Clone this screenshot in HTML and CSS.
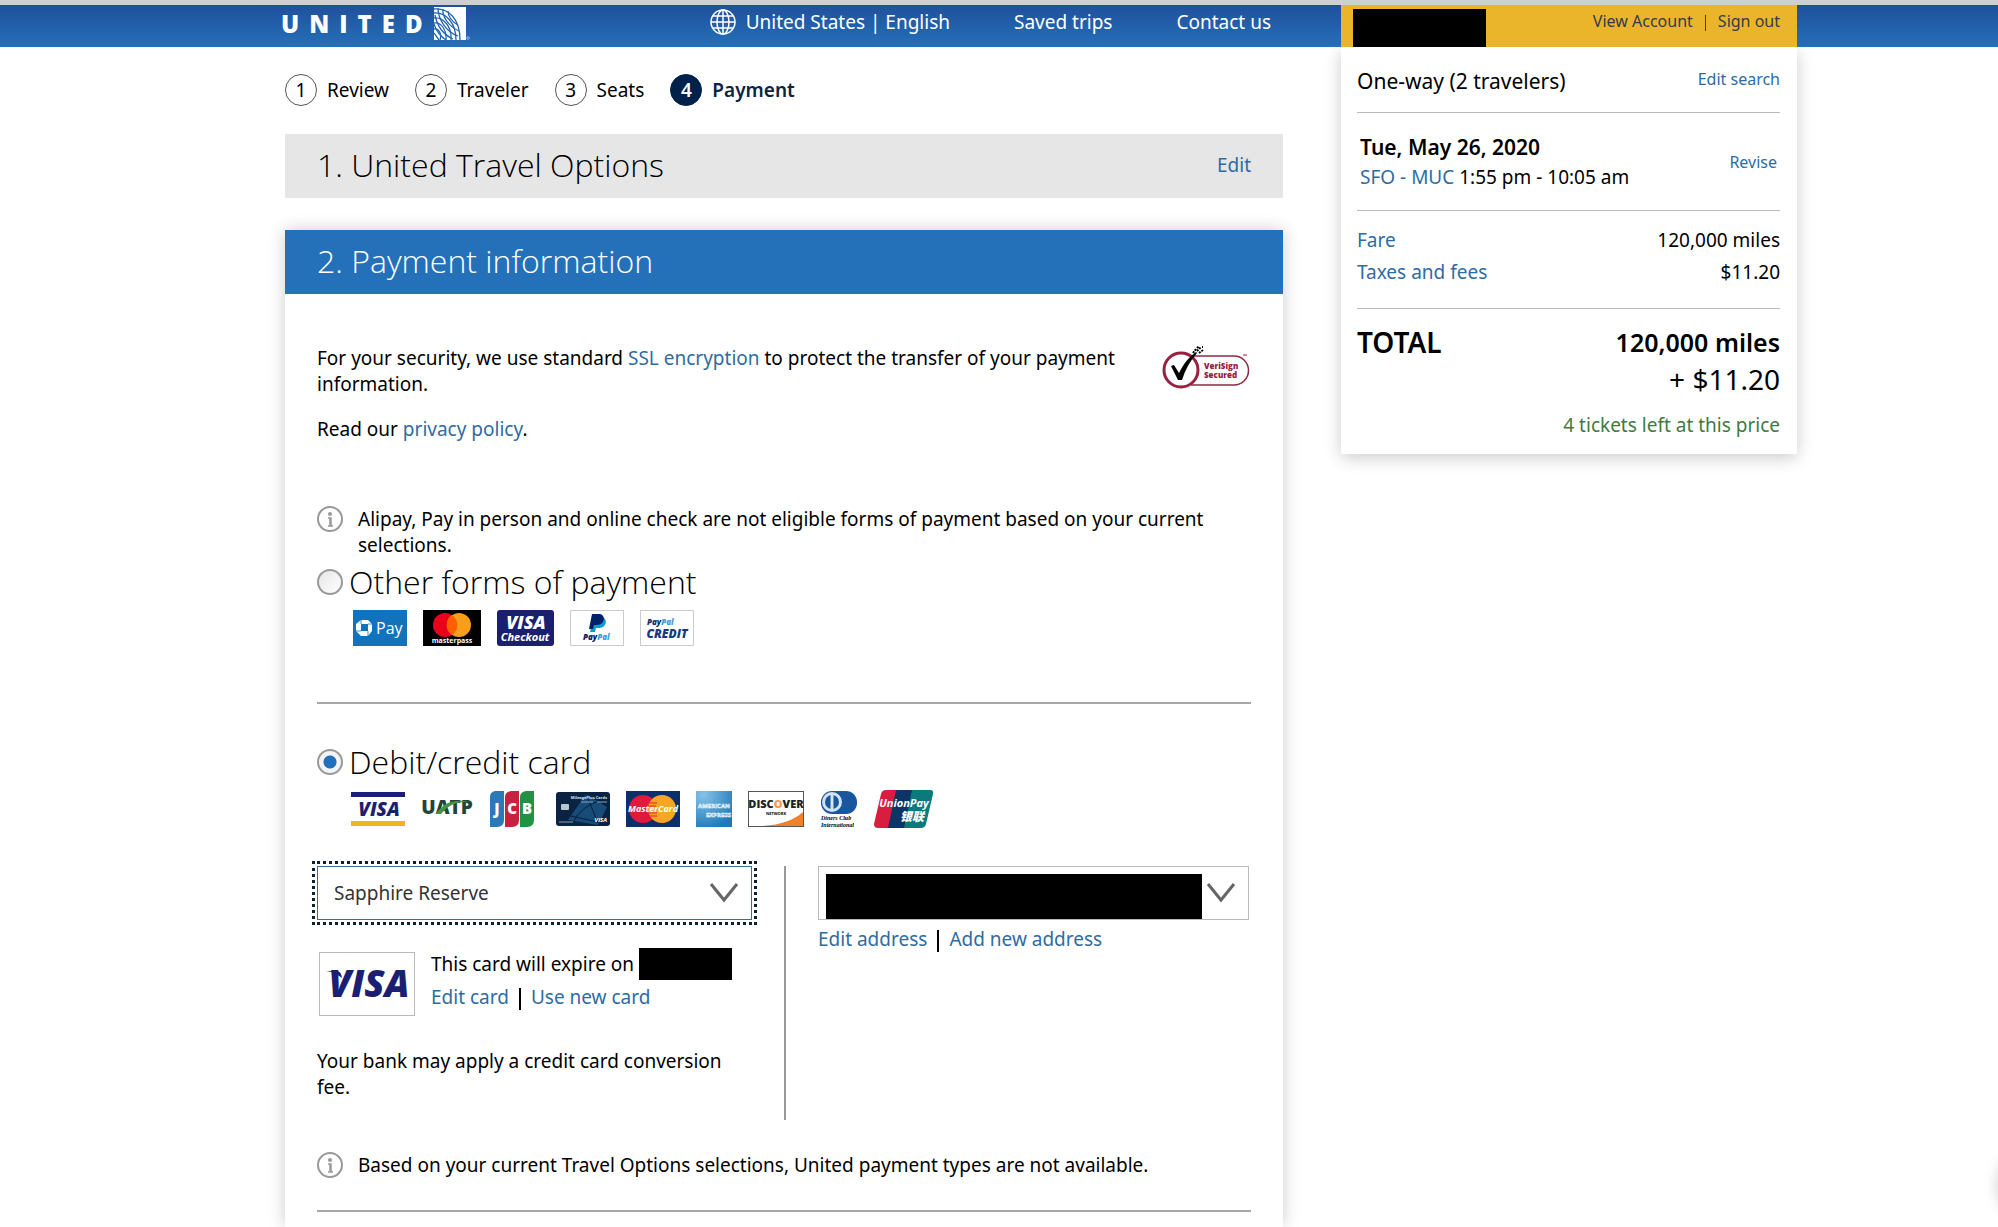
FILE: index.html
```html
<!DOCTYPE html>
<html lang="en">
<head>
    <meta charset="UTF-8">
    <meta name="viewport" content="width=device-width, initial-scale=1.0">
    <title>Payment | United Airlines</title>
    <link rel="stylesheet" href="styles.css">
</head>
<body>
    <!-- Top bar -->
    <header class="topbar">
        <div class="topbar-main">
            <a class="logo" href="#" aria-label="United home">
                <span class="logo-name">UNITED</span>
                <svg width="36" height="34" viewBox="0 0 36 34">
                    <rect width="32" height="33" fill="#fff"/>
                    <g fill="none" stroke="#2565ae" stroke-width="1.3">
                        <path d="M0 2C15 1 26 12 26 33"/>
                        <path d="M0 6C12 5 22 16 22 33"/>
                        <path d="M0 11C10 10 18 20 17 33"/>
                        <path d="M0 16C8 15 13 24 12 33"/>
                        <path d="M0 22C5 21 8 27 6 33"/>
                        <path d="M4 1C4 12 12 25 24 29"/>
                        <path d="M9 2C8 9 14 19 25 24"/>
                        <path d="M14 4C14 9 18 15 24 18"/>
                        <path d="M1 8C3 18 8 27 19 32"/>
                        <path d="M0 17C2 23 6 29 12 33"/>
                        <path d="M0 26L5 33"/>
                    </g>
                    <circle cx="34" cy="31" r="1.3" fill="none" stroke="#8fb6dc" stroke-width="1"/>
                </svg>
            </a>
            <nav class="topnav">
                <a class="locale" href="#">
                    <svg width="26" height="26" viewBox="0 0 26 26" fill="none" stroke="#fff" stroke-width="1.5">
                        <circle cx="13" cy="13" r="12"/>
                        <ellipse cx="13" cy="13" rx="6" ry="12"/>
                        <path d="M13 1v24M1 13h24M3 7h20M3 19h20"/>
                    </svg>
                    United States | English
                </a>
                <a href="#">Saved trips</a>
                <a href="#">Contact us</a>
            </nav>
        </div>
        <div class="account">
            <span class="account-name"></span>
            <div class="account-links">
                <a href="#">View Account</a>
                <a href="#">Sign out</a>
            </div>
        </div>
    </header>

    <div class="page">
        <main class="content">
            <ol class="steps">
                <li><span class="step-number">1</span>Review</li>
                <li><span class="step-number">2</span>Traveler</li>
                <li><span class="step-number">3</span>Seats</li>
                <li class="current"><span class="step-number">4</span>Payment</li>
            </ol>

            <section class="section-closed">
                <h2>1. United Travel Options</h2>
                <a href="#">Edit</a>
            </section>

            <section class="payment">
                <h2 class="payment-title">2. Payment information</h2>
                <form class="payment-body">
                    <div class="security">
                        <div class="security-text">
                            <p>For your security, we use standard <a href="#">SSL encryption</a> to protect the transfer of your payment information.</p>
                            <p>Read our <a href="#">privacy policy</a>.</p>
                        </div>
                        <svg class="verisign" width="90" height="44" viewBox="0 0 90 44">
                            <path d="M32 11H73a14 14 0 0 1 0 29H30" fill="#fff" stroke="#8c2a45" stroke-width="1.5"/>
                            <circle cx="20" cy="25" r="17" fill="#fff" stroke="#98213f" stroke-width="3"/>
                            <path d="M10 21l3-1 5 8C23 18 28 12 35 7l1 1C29 16 24 25 21 35h-4z"/>
                            <path d="M32 8l3-4M36 6l4-4M38 8l4-3M36 3l2-2M41 2h1" stroke="#000" stroke-width="2" stroke-dasharray="2 1"/>
                            <text x="43" y="24" class="seal-text">VeriSign</text>
                            <text x="43" y="33" class="seal-text">Secured</text>
                            <path d="M82 10h4" stroke="#98213f"/>
                        </svg>
                    </div>

                    <div class="notice">
                        <svg class="info-icon" width="26" height="26" viewBox="0 0 26 26">
                            <circle cx="13" cy="13" r="12" fill="none" stroke="#999" stroke-width="2"/>
                            <circle cx="13" cy="8" r="2" fill="#999"/>
                            <path d="M11 12h3v8M11 20h5M13 12v8" fill="none" stroke="#999" stroke-width="1.5"/>
                        </svg>
                        <p>Alipay, Pay in person and online check are not eligible forms of payment based on your current selections.</p>
                    </div>

                    <label class="method"><input type="radio" name="method">Other forms of payment</label>
                    <div class="logos logos-other">
                        <svg width="54" height="36" viewBox="0 0 54 36">
                            <rect width="54" height="36" fill="#1273bd"/>
                            <path d="M8 10h7l4 4v7l-4 5H8l-5-5v-7z" fill="#fff"/>
                            <path d="M8 14h7v7H8z" fill="#1273bd"/>
                            <path d="M8 10v4M19 14h-4M15 26v-5M3 21h5" stroke="#1273bd" stroke-width=".8"/>
                            <text x="23" y="24" font-size="16" fill="#fff">Pay</text>
                        </svg>
                        <svg width="58" height="36" viewBox="0 0 58 36">
                            <rect width="58" height="36"/>
                            <circle cx="22" cy="15" r="12" fill="#eb001b"/>
                            <circle cx="36" cy="15" r="12" fill="#f79e1b"/>
                            <path d="M29 5a12 12 0 0 1 0 20 12 12 0 0 1 0-20" fill="#ff5f00"/>
                            <text x="29" y="33" text-anchor="middle" font-size="7" font-weight="700" fill="#fff">masterpass</text>
                        </svg>
                        <svg width="57" height="36" viewBox="0 0 57 36">
                            <rect width="57" height="36" rx="3" fill="#1a1f71"/>
                            <text x="29" y="19" text-anchor="middle" font-size="18" font-weight="800" font-style="italic" fill="#fff">VISA</text>
                            <text x="28" y="31" text-anchor="middle" font-size="11" font-weight="700" font-style="italic" fill="#fff">Checkout</text>
                        </svg>
                        <svg width="54" height="36" viewBox="0 0 54 36">
                            <rect x=".5" y=".5" width="53" height="35" fill="#fff" stroke="#ccc"/>
                            <path d="M24 7h8c6 1 5 11-3 11h-3l-1 4h-5z" fill="#009cde"/>
                            <path d="M22 4h8c6 1 5 11-3 11h-3l-1 4h-4z" fill="#012169"/>
                            <text x="13" y="30" font-size="8" font-weight="800" font-style="italic" fill="#012169">Pay<tspan fill="#3ba0d8">Pal</tspan></text>
                        </svg>
                        <svg width="54" height="36" viewBox="0 0 54 36">
                            <rect x=".5" y=".5" width="53" height="35" fill="#fff" stroke="#ccc"/>
                            <text x="7" y="15" font-size="8" font-weight="800" font-style="italic" fill="#10316b">Pay<tspan fill="#3ba0d8">Pal</tspan></text>
                            <text x="27" y="28" text-anchor="middle" font-size="12" font-weight="800" font-style="italic" fill="#173a7a">CREDIT</text>
                        </svg>
                    </div>

                    <hr>

                    <label class="method"><input type="radio" name="method" checked>Debit/credit card</label>
                    <div class="logos logos-cards">
                        <svg width="54" height="36" viewBox="0 0 54 36">
                            <rect y="1" width="54" height="5" fill="#1a1f71"/>
                            <rect y="30" width="54" height="5" fill="#f0b323"/>
                            <text x="28" y="25" text-anchor="middle" font-size="19" font-weight="800" font-style="italic" fill="#1a1f71">VISA</text>
                        </svg>
                        <svg width="52" height="36" viewBox="0 0 52 36">
                            <text x="26" y="23" text-anchor="middle" font-size="19" font-weight="800" fill="#214536">UATP</text>
                            <path d="M15 23C22 12 32 7 50 11 38 10 28 13 20 23z" fill="#3f9448"/>
                        </svg>
                        <svg width="51" height="38" viewBox="0 0 51 38">
                            <path d="M6 1h9v29q0 7-7 7H1V7q0-5 5-6z" fill="#2a7ab8"/>
                            <path d="M22 1h8v29q0 7-7 7h-7V7q0-5 6-6z" fill="#c8203f"/>
                            <path d="M37 1h8v29q0 7-7 7h-7V7q0-5 6-6z" fill="#219146"/>
                            <g font-size="15" font-weight="800" fill="#fff" text-anchor="middle">
                                <text x="8" y="24">J</text>
                                <text x="23" y="24">C</text>
                                <text x="38" y="24">B</text>
                            </g>
                        </svg>
                        <svg width="54" height="36" viewBox="0 0 54 36">
                            <rect y="1" width="54" height="34" rx="3" fill="#0a2342"/>
                            <path d="M12 29L30 3l21 13-9 18z" fill="#174b78"/>
                            <path d="M16 34Q24 14 47 9M10 24L42 31M30 3l12 29" fill="none" stroke="#08203d"/>
                            <rect x="5" y="13" width="8" height="6" rx="1" fill="#b9c4cd"/>
                            <text x="51" y="8" text-anchor="end" font-size="4" font-weight="700" fill="#d4e3ee">MileagePlus Cards</text>
                            <text x="51" y="31" text-anchor="end" font-size="6" font-weight="700" font-style="italic" fill="#fff">VISA</text>
                            <path d="M3 31h14M25 11h12M41 11h10" stroke="#8aa2b7"/>
                        </svg>
                        <svg width="54" height="36" viewBox="0 0 54 36">
                            <rect width="54" height="36" fill="#0b2f6d"/>
                            <circle cx="17" cy="18" r="14" fill="#e2183d"/>
                            <circle cx="36" cy="18" r="14" fill="#f6a623"/>
                            <path d="M23 12h8M22 15h8M22 22h9M23 25h8" stroke="#e2183d"/>
                            <text x="27" y="21" text-anchor="middle" font-size="9" font-weight="700" font-style="italic" fill="#fff">MasterCard</text>
                        </svg>
                        <svg width="36" height="36" viewBox="0 0 36 36">
                            <defs>
                                <radialGradient id="amex" cx=".2" cy=".1" r="1">
                                    <stop offset="0" stop-color="#86c3e8"/>
                                    <stop offset="1" stop-color="#1e78b9"/>
                                </radialGradient>
                            </defs>
                            <rect width="36" height="36" fill="url(#amex)"/>
                            <text x="18" y="17" text-anchor="middle" font-size="6" font-weight="700" fill="none" stroke="#e5f2fa" stroke-width=".6">AMERICAN</text>
                            <text x="35" y="26" text-anchor="end" font-size="6" font-weight="700" fill="none" stroke="#e5f2fa" stroke-width=".6">EXPRESS</text>
                        </svg>
                        <svg width="56" height="36" viewBox="0 0 56 36">
                            <rect x=".5" y=".5" width="55" height="35" fill="#fff" stroke="#555"/>
                            <path d="M15 35Q42 33 55 21V35z" fill="#f0812b"/>
                            <text x="28" y="17" text-anchor="middle" font-size="11" font-weight="800" fill="#222">DISC<tspan fill="#f39a4a">O</tspan>VER</text>
                            <text x="28" y="24" text-anchor="middle" font-size="4" font-weight="700">NETWORK</text>
                        </svg>
                        <svg width="38" height="38" viewBox="0 0 38 38">
                            <rect x="1" y="1" width="36" height="23" rx="11" fill="#1857a0"/>
                            <circle cx="12" cy="12" r="10" fill="#d5e1ef"/>
                            <circle cx="12" cy="12" r="7" fill="#1857a0"/>
                            <path d="M12 5v15" stroke="#d5e1ef" stroke-width="3"/>
                            <text x="1" y="30" font-size="6" font-style="italic" font-weight="700" class="serif">Diners Club</text>
                            <text x="1" y="37" font-size="6" font-style="italic" font-weight="700" class="serif">International</text>
                        </svg>
                        <svg width="60" height="38" viewBox="0 0 60 38">
                            <path d="M12 0h12l-8 38H4q-4 0-4-4L7 4q1-4 5-4z" fill="#d81e3f"/>
                            <path d="M22 0h20l-8 38H14z" fill="#0c3566"/>
                            <path d="M38 0h18q4 0 3 4l-7 30q-1 4-5 4H30z" fill="#0b7a7c"/>
                            <text x="30" y="17" text-anchor="middle" font-size="11" font-weight="700" font-style="italic" fill="#fff">UnionPay</text>
                            <text x="26" y="31" font-size="12" font-weight="900" font-style="italic" fill="#fff" class="cjk" lang="zh">银联</text>
                        </svg>
                    </div>

                    <div class="details">
                        <div class="card-column">
                            <select class="dropdown dropdown-focus" aria-label="Saved card">
                                <option>Sapphire Reserve</option>
                            </select>
                            <div class="saved-card">
                                <svg class="card-image" width="96" height="64" viewBox="0 0 96 64">
                                    <rect x=".5" y=".5" width="95" height="63" fill="#fff" stroke="#bbb"/>
                                    <text x="50" y="45" text-anchor="middle" font-size="37" font-weight="800" font-style="italic" fill="#1a1f71">VISA</text>
                                    <path d="M7 19h11q4 0 5 7Q16 20 7 19z" fill="#1a1f71"/>
                                </svg>
                                <div class="card-info">
                                    <p class="expiry">This card will expire on <span class="redacted"></span></p>
                                    <div class="links">
                                        <a href="#">Edit card</a>
                                        <a href="#">Use new card</a>
                                    </div>
                                </div>
                            </div>
                            <p>Your bank may apply a credit card conversion fee.</p>
                        </div>
                        <div class="address-column">
                            <div class="address-select">
                                <select class="dropdown" aria-label="Billing address">
                                    <option></option>
                                </select>
                                <span class="address-mask"></span>
                            </div>
                            <div class="links">
                                <a href="#">Edit address</a>
                                <a href="#">Add new address</a>
                            </div>
                        </div>
                    </div>

                    <div class="notice">
                        <svg class="info-icon" width="26" height="26" viewBox="0 0 26 26">
                            <circle cx="13" cy="13" r="12" fill="none" stroke="#999" stroke-width="2"/>
                            <circle cx="13" cy="8" r="2" fill="#999"/>
                            <path d="M11 12h3v8M11 20h5M13 12v8" fill="none" stroke="#999" stroke-width="1.5"/>
                        </svg>
                        <p>Based on your current Travel Options selections, United payment types are not available.</p>
                    </div>
                    <hr class="last-rule">
                </form>
            </section>
        </main>

        <!-- Trip summary -->
        <aside class="summary">
            <div class="summary-row trip">
                <span class="trip-type">One-way (2 travelers)</span>
                <a class="small" href="#">Edit search</a>
            </div>
            <div class="summary-row flight">
                <div>
                    <strong>Tue, May 26, 2020</strong>
                    <p><a href="#">SFO - MUC</a> 1:55 pm - 10:05 am</p>
                </div>
                <a class="small" href="#">Revise</a>
            </div>
            <div class="fares">
                <div class="fare-line"><a href="#">Fare</a><span>120,000 miles</span></div>
                <div class="fare-line"><a href="#">Taxes and fees</a><span>$11.20</span></div>
            </div>
            <div class="total">
                <span class="total-label">TOTAL</span>
                <div class="total-price">
                    <strong>120,000 miles</strong>
                    <span>+ $11.20</span>
                </div>
            </div>
            <p class="tickets-left">4 tickets left at this price</p>
        </aside>
    </div>

    <button class="feedback" aria-label="Feedback"></button>
</body>
</html>
```
FILE: styles.css
```css
* {
    box-sizing: border-box;
}

body {
    font-family: "Noto Sans", "Open Sans", sans-serif;
    font-size: 19px;
    line-height: 26px;
    margin: 0;
    min-height: 100vh;
    display: flex;
    flex-direction: column;
    color: #000;
    background-color: #fff;
}

h2, p, ol {
    margin: 0;
    padding: 0;
}

a {
    color: #2f6ba3;
    text-decoration: none;
}

h2, .method {
    font-family: "Open Sans", sans-serif;
    font-size: 32px;
    font-weight: 300;
    line-height: 40px;
}

svg {
    font-family: "Open Sans", sans-serif;
}

/* Top bar */
.topbar, .page {
    display: grid;
    grid-template-columns: 998fr 456fr;
    column-gap: 58px;
    padding: 0 201px 0 285px;
}

.topbar {
    height: 47px;
    border-top: 5px solid #cfcfd1;
    background: linear-gradient(#20509c, #2470b9);
}

.topbar-main {
    display: flex;
    justify-content: space-between;
    padding-right: 12px;
}

.topbar a {
    color: #fff;
}

.logo {
    display: flex;
    gap: 1px;
    padding-top: 2px;
    margin-left: -4px;
}

.logo-name {
    font-family: "Open Sans", sans-serif;
    font-size: 24px;
    font-weight: 800;
    line-height: 34px;
    letter-spacing: 10px;
}

.topnav {
    display: flex;
    gap: 64px;
    padding-top: 4px;
}

.locale {
    display: flex;
    gap: 10px;
}

.account {
    display: flex;
    justify-content: space-between;
    padding: 4px 17px 0 12px;
    background-color: #eab52b;
}

.account-name {
    width: 133px;
    background-color: #000;
}

.account-links {
    display: flex;
    font-size: 16px;
    line-height: 24px;
}

.account-links a {
    color: #333c4d;
}

.account-links a + a::before {
    content: "";
    display: inline-block;
    height: 16px;
    margin: 0 12px;
    border-left: 1px solid #333c4d;
    vertical-align: middle;
}

/* Main column */
.page {
    flex: 1;
}

.content {
    display: flex;
    flex-direction: column;
}

.steps {
    display: flex;
    gap: 26px;
    padding: 27px 0 28px;
    list-style: none;
}

.steps li {
    display: flex;
    align-items: center;
    gap: 10px;
}

.step-number {
    width: 32px;
    height: 32px;
    border: 1px solid #555;
    border-radius: 50%;
    line-height: 30px;
    text-align: center;
}

.current {
    font-weight: 600;
    color: #0a2444;
}

.current .step-number {
    border-color: #00214a;
    background-color: #00214a;
    color: #fff;
}

.section-closed {
    display: flex;
    align-items: center;
    justify-content: space-between;
    padding: 11px 32px 13px;
    margin-bottom: 32px;
    background-color: #e6e6e6;
}

.payment {
    flex: 1;
    box-shadow: 0 0 16px rgba(0, 0, 0, 0.2);
}

.payment-title {
    padding: 11px 32px 13px;
    background-color: #2471ba;
    color: #fff;
}

.payment-body {
    padding: 51px 32px 0;
}

.security {
    display: flex;
    justify-content: space-between;
    margin-bottom: 64px;
}

.security-text {
    width: 820px;
}

.security p + p {
    margin-top: 19px;
}

.seal-text {
    font-size: 8px;
    font-weight: 800;
    fill: #98213f;
}

.notice {
    display: flex;
    gap: 15px;
}

.info-icon {
    flex-shrink: 0;
}

.method {
    display: flex;
    align-items: center;
    gap: 6px;
}

.notice + .method {
    margin-top: 4px;
}

.method input {
    appearance: none;
    width: 26px;
    height: 26px;
    margin: 0;
    border: 2px solid #999;
    border-radius: 50%;
    background: linear-gradient(135deg, #e6e6e6, #fff);
}

.method input:checked {
    background: radial-gradient(circle, #2070bd 6px, #f4f4f4 7px);
}

/* Payment logos */
.logos {
    display: flex;
    align-items: center;
}

.logos-other {
    gap: 16px;
    padding: 8px 36px 0;
}

.logos-cards {
    gap: 16px;
    padding: 8px 34px 0;
    margin-bottom: 38px;
}

.serif {
    font-family: "Liberation Serif", serif;
}

.cjk {
    font-family: "Noto Sans CJK SC", sans-serif;
}

hr {
    height: 2px;
    margin: 56px 0 38px;
    border: 0;
    background-color: #a6a6a6;
}

.last-rule {
    margin: 32px 0 0;
}

/* Saved card and billing address */
.details {
    display: grid;
    grid-template-columns: 1fr 1fr;
    margin-bottom: 32px;
}

.card-column {
    padding-right: 32px;
    padding-bottom: 20px;
}

.address-column {
    padding: 0 2px 0 32px;
    border-left: 2px solid #999;
}

.dropdown {
    appearance: none;
    display: block;
    width: 100%;
    height: 54px;
    padding: 0 16px;
    border: 1px solid #bbb;
    border-radius: 0;
    font: inherit;
    color: #333;
    background: #fff url("data:image/svg+xml,%3Csvg xmlns='http://www.w3.org/2000/svg' width='30' height='20'%3E%3Cpath d='M2 1l13 16L28 1' fill='none' stroke='%23666' stroke-width='3'/%3E%3C/svg%3E") no-repeat right 12px center;
}

.dropdown-focus {
    border-color: #3f6c93;
    outline: 3px dotted #0c2030;
    outline-offset: 2px;
}

.address-select {
    position: relative;
    margin-bottom: 6px;
}

.address-mask {
    position: absolute;
    top: 8px;
    bottom: 1px;
    left: 8px;
    right: 47px;
    background-color: #000;
}

.saved-card {
    display: flex;
    gap: 16px;
    padding: 28px 0 0 2px;
    margin-bottom: 32px;
}

.card-image {
    margin-top: 4px;
}

.card-info {
    display: flex;
    flex-direction: column;
    gap: 4px;
}

.expiry {
    display: flex;
    align-items: center;
    gap: 5px;
}

.redacted {
    width: 93px;
    height: 32px;
    background-color: #000;
}

.links {
    display: flex;
    align-items: center;
}

.links a + a::before {
    content: "";
    display: inline-block;
    height: 22px;
    margin: 0 10px;
    border-left: 2px solid #000;
    vertical-align: middle;
}

/* Trip summary */
.summary {
    align-self: start;
    padding: 19px 17px 16px 16px;
    box-shadow: 0 4px 16px rgba(0, 0, 0, 0.2);
    clip-path: inset(0 -24px -24px);
}

.summary-row {
    display: flex;
    justify-content: space-between;
    border-bottom: 1px solid #bbb;
}

.small {
    font-size: 16px;
}

.trip {
    padding-bottom: 16px;
}

.trip-type, .flight strong {
    font-size: 21px;
    line-height: 30px;
}

.flight {
    align-items: center;
    padding: 19px 3px 18px;
}

.flight strong {
    display: block;
}

.flight p {
    line-height: 30px;
}

strong, .total-label {
    font-weight: 600;
}

.fares {
    padding: 13px 0 20px;
    border-bottom: 1px solid #bbb;
}

.fare-line {
    display: flex;
    justify-content: space-between;
    line-height: 32px;
}

.total {
    display: flex;
    justify-content: space-between;
    padding-top: 15px;
    font-size: 28px;
    line-height: 37px;
}

.total-price {
    display: flex;
    flex-direction: column;
    text-align: right;
}

.total-price strong {
    font-size: 25px;
}

.tickets-left {
    padding-top: 14px;
    text-align: right;
    color: #3f7a3f;
}

.feedback {
    position: fixed;
    right: -64px;
    bottom: 10px;
    width: 64px;
    height: 64px;
    border: 0;
    border-radius: 50%;
    background-color: #fff;
    box-shadow: 0 0 16px rgba(0, 0, 0, 0.2);
}
```
